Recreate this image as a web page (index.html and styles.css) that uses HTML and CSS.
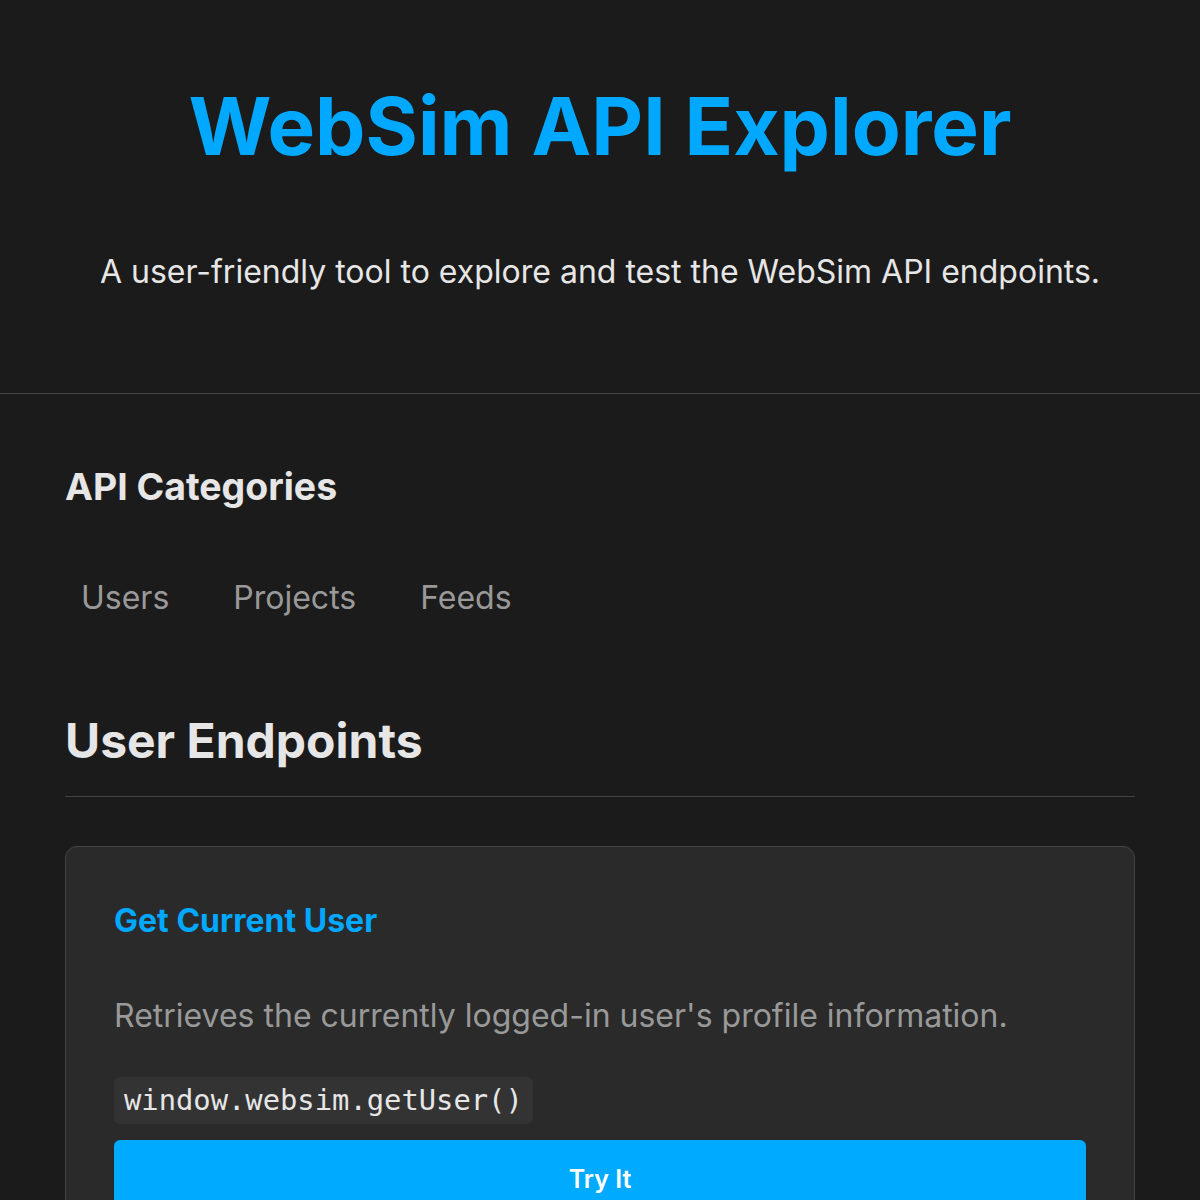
FILE: index.html
```html
<!DOCTYPE html>
<html lang="en">
<head>
    <meta charset="UTF-8">
    <meta name="viewport" content="width=device-width, initial-scale=1.0">
    <title>WebSim API Explorer</title>
    <link rel="stylesheet" href="styles.css">
</head>
<body>

<header>
    <h1>WebSim API Explorer</h1>
    <p class="header-text">A user-friendly tool to explore and test the WebSim API endpoints.</p>
</header>

<main class="container">
    <section class="categories">
        <h2>API Categories</h2>
        <nav class="tabs">
            <button class="tab">Users</button>
            <button class="tab">Projects</button>
            <button class="tab">Feeds</button>
        </nav>
    </section>

    <section class="endpoints">
        <h2 class="section-title">User Endpoints</h2>

        <div class="endpoint-card">
            <h3>Get Current User</h3>
            <p class="endpoint-desc">Retrieves the currently logged-in user's profile information.</p>
            <code class="endpoint-code">window.websim.getUser()</code>
            <button class="try-btn">Try It</button>
        </div>
    </section>
</main>

</body>
</html>
```

FILE: styles.css
```css
body {
    font-family: Inter, "Noto Sans", sans-serif;
    font-size: 32px;
    background-color: #1b1b1b;
    color: #e6e6e6;
    margin: 0;
    padding: 0;
}
header {
    text-align: center;
    padding: 78px 20px 97px;
    border-bottom: 1px solid #444;
}
h1 {
    margin: 0;
    font-size: 80px;
    line-height: 1.2;
    font-weight: 700;
    color: #00a8ff;
}
.header-text {
    margin: 74px 0 0;
    font-size: 32px;
    line-height: 1.5;
    color: #e6e6e6;
}
.container {
    padding: 0 65px 60px;
}
.categories h2 {
    margin: 71px 0 0;
    font-size: 1.17em;
    line-height: 1.2;
    font-weight: 700;
}
.tabs {
    display: flex;
    gap: 32px;
    margin-top: 48px;
}
.tab {
    background: none;
    border: none;
    color: #999;
    font-family: inherit;
    font-size: 32px;
    line-height: 1.5;
    padding: 16px;
    cursor: pointer;
}
.tab:hover {
    color: #e6e6e6;
}
.section-title {
    margin: 74px 0 0;
    font-size: 48px;
    line-height: 1.2;
    font-weight: 700;
    padding-bottom: 26px;
    border-bottom: 1px solid #444;
}
.endpoint-card {
    margin-top: 49px;
    background: #2a2a2a;
    border: 1px solid #444;
    border-radius: 12px;
    padding: 48px;
}
.endpoint-card h3 {
    margin: 2px 0 0;
    font-size: 32px;
    line-height: 1.5;
    font-weight: 700;
    color: #00a8ff;
}
.endpoint-desc {
    margin: 47px 0 37px;
    font-size: 32px;
    line-height: 1.5;
    color: #999;
}
.endpoint-code {
    display: inline-block;
    font-family: "DejaVu Sans Mono", "Liberation Mono", monospace;
    font-size: 0.9em;
    line-height: 35px;
    padding: 6px 10px;
    background: #333;
    border-radius: 6px;
    color: #e6e6e6;
}
.try-btn {
    display: block;
    width: 100%;
    margin-top: 16px;
    padding: 24px 22px 22px;
    background: #00aaff;
    color: #fff;
    border: none;
    border-radius: 6px;
    font-family: inherit;
    font-size: 25px;
    font-weight: 600;
    cursor: pointer;
}
.try-btn:hover {
    background: #0090dd;
}
```
